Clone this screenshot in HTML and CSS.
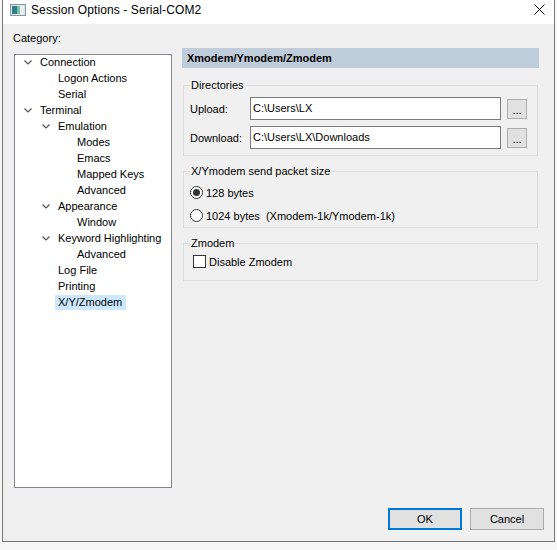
FILE: index.html
```html
<!DOCTYPE html>
<html>
<head>
<meta charset="utf-8">
<link rel="stylesheet" href="styles.css">
</head>
<body>
<div class="window">
  <div class="titlebar">
    <svg class="app-icon" width="16" height="12" viewBox="0 0 16 12">
      <rect x="0.5" y="0.5" width="15" height="11" fill="#dfe6ec" stroke="#8a96a2"/>
      <rect x="2" y="2" width="5" height="8" fill="#2f7d8c"/>
      <rect x="7" y="2" width="3" height="8" fill="#7fc2a6"/>
      <rect x="10" y="2" width="4" height="8" fill="#e9eef2"/>
    </svg>
    <span class="title">Session Options - Serial-COM2</span>
    <svg class="close" width="11" height="11" viewBox="0 0 11 11">
      <path d="M0.5 0.5 L10.5 10.5 M10.5 0.5 L0.5 10.5" stroke="#000" stroke-width="1"/>
    </svg>
  </div>
  <div class="client">
    <div class="main">
      <div class="left">
        <div class="cat-label">Category:</div>
        <div class="tree">
          <div class="row l0"><span class="chev"><svg width="8" height="5" viewBox="0 0 8 5"><path d="M0.5 0.5 L4 4 L7.5 0.5" fill="none" stroke="#555" stroke-width="1.2"/></svg></span><span class="txt">Connection</span></div>
          <div class="row l1"><span class="chev"></span><span class="txt">Logon Actions</span></div>
          <div class="row l1"><span class="chev"></span><span class="txt">Serial</span></div>
          <div class="row l0"><span class="chev"><svg width="8" height="5" viewBox="0 0 8 5"><path d="M0.5 0.5 L4 4 L7.5 0.5" fill="none" stroke="#555" stroke-width="1.2"/></svg></span><span class="txt">Terminal</span></div>
          <div class="row l1"><span class="chev"><svg width="8" height="5" viewBox="0 0 8 5"><path d="M0.5 0.5 L4 4 L7.5 0.5" fill="none" stroke="#555" stroke-width="1.2"/></svg></span><span class="txt">Emulation</span></div>
          <div class="row l2"><span class="chev"></span><span class="txt">Modes</span></div>
          <div class="row l2"><span class="chev"></span><span class="txt">Emacs</span></div>
          <div class="row l2"><span class="chev"></span><span class="txt">Mapped Keys</span></div>
          <div class="row l2"><span class="chev"></span><span class="txt">Advanced</span></div>
          <div class="row l1"><span class="chev"><svg width="8" height="5" viewBox="0 0 8 5"><path d="M0.5 0.5 L4 4 L7.5 0.5" fill="none" stroke="#555" stroke-width="1.2"/></svg></span><span class="txt">Appearance</span></div>
          <div class="row l2"><span class="chev"></span><span class="txt">Window</span></div>
          <div class="row l1"><span class="chev"><svg width="8" height="5" viewBox="0 0 8 5"><path d="M0.5 0.5 L4 4 L7.5 0.5" fill="none" stroke="#555" stroke-width="1.2"/></svg></span><span class="txt">Keyword Highlighting</span></div>
          <div class="row l2"><span class="chev"></span><span class="txt">Advanced</span></div>
          <div class="row l1"><span class="chev"></span><span class="txt">Log File</span></div>
          <div class="row l1"><span class="chev"></span><span class="txt">Printing</span></div>
          <div class="row l1"><span class="chev"></span><span class="txt selected">X/Y/Zmodem</span></div>
        </div>
      </div>
      <div class="right">
        <div class="header">Xmodem/Ymodem/Zmodem</div>
        <fieldset class="group dirs">
          <legend>Directories</legend>
          <div class="field">
            <span class="flabel">Upload:</span>
            <span class="input">C:\Users\LX</span>
            <span class="browse">...</span>
          </div>
          <div class="field">
            <span class="flabel">Download:</span>
            <span class="input">C:\Users\LX\Downloads</span>
            <span class="browse">...</span>
          </div>
        </fieldset>
        <fieldset class="group packet">
          <legend>X/Ymodem send packet size</legend>
          <div class="opt"><span class="radio checked"></span><span>128 bytes</span></div>
          <div class="opt"><span class="radio"></span><span>1024 bytes&nbsp; (Xmodem-1k/Ymodem-1k)</span></div>
        </fieldset>
        <fieldset class="group zmodem">
          <legend>Zmodem</legend>
          <div class="opt check-opt"><span class="checkbox"></span><span>Disable Zmodem</span></div>
        </fieldset>
      </div>
    </div>
    <div class="buttons">
      <div class="btn default">OK</div>
      <div class="btn">Cancel</div>
    </div>
  </div>
</div>
</body>
</html>
```
FILE: styles.css
```css
* { box-sizing: border-box; }
html, body { margin: 0; padding: 0; }
body {
  width: 557px;
  height: 550px;
  background: #f7f7f7;
  font-family: "Liberation Sans", Arial, sans-serif;
  font-size: 11px;
  color: #000;
  overflow: hidden;
}
.window {
  margin-left: 2px;
  width: 553px;
  height: 542px;
  border: 1px solid #767676;
  border-top: none;
  background: #f0f0f0;
  display: flex;
  flex-direction: column;
}
.titlebar {
  height: 24px;
  background: #fff;
  display: flex;
  align-items: center;
  padding-left: 7px;
}
.app-icon { flex: none; margin-top: -4px; }
.title {
  font-size: 12px;
  margin-left: 5px;
  margin-top: -5px;
  flex: 1;
  letter-spacing: 0.1px;
}
.close { margin-right: 9px; margin-top: -5px; }
.client {
  flex: 1;
  display: flex;
  flex-direction: column;
}
.main {
  display: flex;
  padding-left: 11px;
}
.left {
  width: 158px;
  padding-top: 8px;
}
.cat-label {
  line-height: 13px;
  margin-left: -1px;
}
.tree {
  margin-top: 9px;
  height: 434px;
  border: 1px solid #828790;
  background: #fff;
}
.row {
  height: 16px;
  display: flex;
  align-items: flex-start;
  white-space: nowrap;
}
.row.l0 { padding-left: 9px; }
.row.l1 { padding-left: 27px; }
.row.l2 { padding-left: 46px; }
.chev {
  width: 16px;
  height: 15px;
  flex: none;
  display: flex;
  align-items: center;
}
.chev svg { display: block; }
.txt { line-height: 15px; }
.txt.selected {
  background: #cce8ff;
  padding: 0 4px 0 3px;
  margin-left: -3px;
}
.right {
  margin-left: 10px;
  width: 357px;
  padding-top: 24px;
}
.header {
  height: 20px;
  background: #bfcddb;
  font-weight: bold;
  line-height: 20px;
  padding-left: 5px;
}
.group {
  margin: 0 0 0 1px;
  width: 355px;
  border: 1px solid #dcdcdc;
  padding: 0 6px;
  min-width: 0;
}
.group legend {
  padding: 0 1px;
  line-height: 14px;
}
.dirs { margin-top: 10px; padding-top: 5px; padding-bottom: 6px; }
.field {
  display: flex;
  align-items: center;
  height: 23px;
}
.field + .field { margin-top: 6px; }
.flabel { width: 60px; flex: none; }
.input {
  width: 251px;
  height: 23px;
  border: 1px solid #7a7a7a;
  background: #fff;
  padding-left: 2px;
  line-height: 21px;
  flex: none;
  white-space: nowrap;
}
.browse {
  margin-left: 6px;
  width: 20px;
  height: 20px;
  border: 1px solid #adadad;
  background: #e1e1e1;
  text-align: center;
  line-height: 21px;
  flex: none;
}
.packet { margin-top: 8px; padding-top: 6px; padding-bottom: 3px; }
.opt {
  display: flex;
  align-items: center;
  height: 17px;
  white-space: nowrap;
}
.opt + .opt { margin-top: 6px; }
.radio {
  width: 13px;
  height: 13px;
  border: 1px solid #333;
  border-radius: 50%;
  background: #fff;
  margin-right: 3px;
  flex: none;
  display: flex;
  align-items: center;
  justify-content: center;
}
.radio.checked::after {
  content: "";
  width: 7px;
  height: 7px;
  border-radius: 50%;
  background: #333;
}
.zmodem { margin-top: 8px; padding-top: 3px; padding-bottom: 10px; }
.check-opt { margin-left: 3px; }
.checkbox {
  width: 13px;
  height: 13px;
  border: 1px solid #333;
  background: #fff;
  margin-right: 3px;
  flex: none;
}
.buttons {
  margin-top: auto;
  display: flex;
  justify-content: flex-end;
  gap: 8px;
  padding: 0 10px 11px 0;
}
.btn {
  width: 74px;
  height: 22px;
  border: 1px solid #adadad;
  background: #e1e1e1;
  text-align: center;
  line-height: 20px;
}
.btn.default {
  border: 2px solid #0078d7;
  line-height: 18px;
}
```
